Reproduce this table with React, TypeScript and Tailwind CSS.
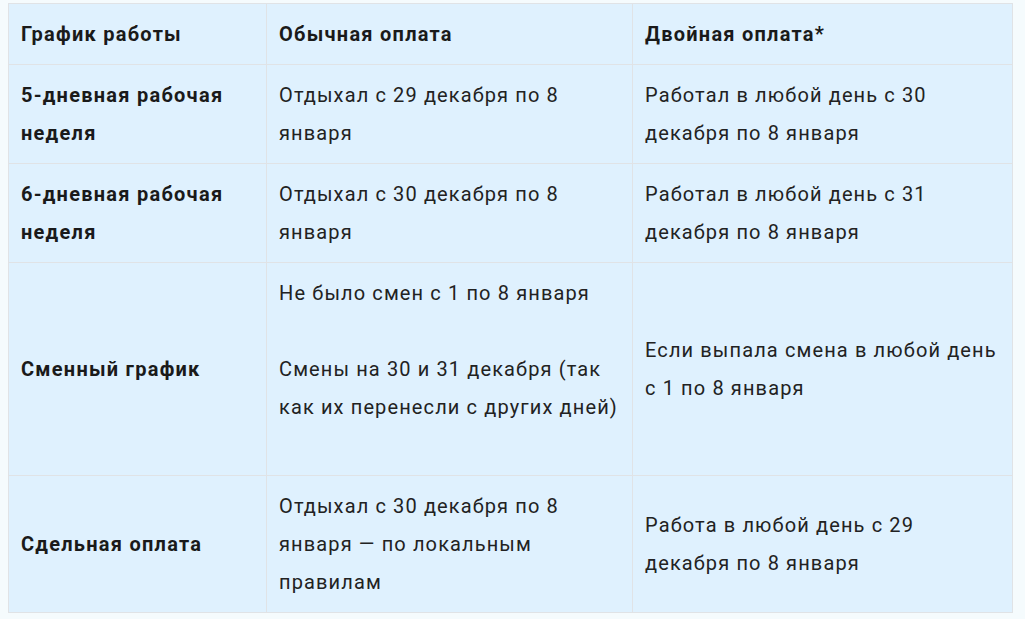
import React from "react";

const rows: { h: string; a: React.ReactNode; b: string }[] = [
  { h: "5-дневная рабочая неделя", a: "Отдыхал с 29 декабря по 8 января", b: "Работал в любой день с 30 декабря по 8 января" },
  { h: "6-дневная рабочая неделя", a: "Отдыхал с 30 декабря по 8 января", b: "Работал в любой день с 31 декабря по 8 января" },
  {
    h: "Сменный график",
    a: (
      <>
        <p className="mb-[38px]">Не было смен с 1 по 8 января</p>
        <p className="mb-[38px]">Смены на 30 и 31 декабря (так как их перенесли с других дней)</p>
      </>
    ),
    b: "Если выпала смена в любой день с 1 по 8 января",
  },
  { h: "Сдельная оплата", a: "Отдыхал с 30 декабря по 8 января — по локальным правилам", b: "Работа в любой день с 29 декабря по 8 января" },
];

const cell = "border border-[#e0e3e6] px-[12px] py-[11px] align-middle";

export default function App() {
  return (
    <div className="min-h-[619px] w-full bg-[#f5fbfd] pt-[3px] pl-[8px]" style={{ fontFamily: "Roboto, 'Noto Sans', sans-serif" }}>
      <table className="border-collapse bg-[#dff1fe] text-[20px] leading-[38px] tracking-[1.12px] text-[#222]">
        <colgroup>
          <col className="w-[258px]" />
          <col className="w-[366px]" />
          <col className="w-[380px]" />
        </colgroup>
        <thead>
          <tr>
            <th className={`${cell} text-left font-bold tracking-[1.25px] text-[#1a1a1a]`}>График работы</th>
            <th className={`${cell} text-left font-bold tracking-[1.25px] text-[#1a1a1a]`}>Обычная оплата</th>
            <th className={`${cell} text-left font-bold tracking-[1.25px] text-[#1a1a1a]`}>Двойная оплата*</th>
          </tr>
        </thead>
        <tbody>
          {rows.map((r, i) => (
            <tr key={i}>
              <td className={`${cell} font-bold tracking-[1.25px] text-[#1a1a1a]`}>{r.h}</td>
              <td className={cell}>{r.a}</td>
              <td className={cell}>{r.b}</td>
            </tr>
          ))}
        </tbody>
      </table>
    </div>
  );
}
